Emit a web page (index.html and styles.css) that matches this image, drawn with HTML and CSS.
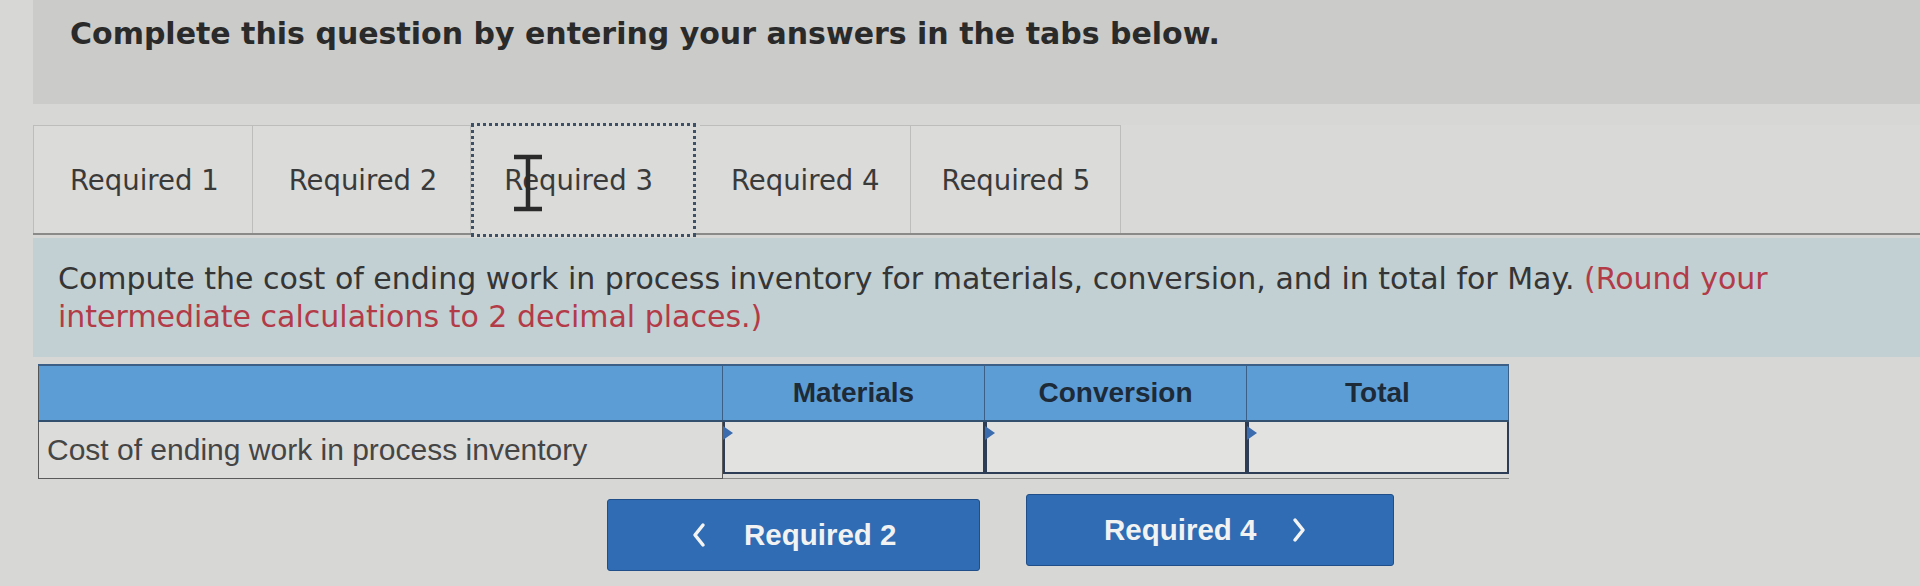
FILE: index.html
```html
<!DOCTYPE html>
<html>
<head>
<meta charset="utf-8">
<link rel="stylesheet" href="styles.css">
</head>
<body>
<div class="page">
  <header class="banner">
    <h1 class="title">Complete this question by entering your answers in the tabs below.</h1>
  </header>

  <nav class="tabs">
    <div class="tab tab-wide">Required 1</div>
    <div class="tab tab-wide">Required 2</div>
    <div class="tab tab-focus">Required 3
      <svg class="ibeam" width="32" height="58" viewBox="0 0 32 58">
        <path d="M2 3 H30 M16 3 V55 M2 55 H30" stroke="#2a2a2a" stroke-width="4.5" fill="none"/>
      </svg>
    </div>
    <div class="tab">Required 4</div>
    <div class="tab">Required 5</div>
  </nav>

  <section class="instructions">
    <p>Compute the cost of ending work in process inventory for materials, conversion, and in total for May. <span class="hint">(Round your<br>intermediate calculations to 2 decimal places.)</span></p>
  </section>

  <table class="grid">
    <thead>
      <tr>
        <th class="label-col"></th>
        <th class="num-col">Materials</th>
        <th class="num-col">Conversion</th>
        <th class="num-col">Total</th>
      </tr>
    </thead>
    <tbody>
      <tr>
        <td class="label">Cost of ending work in process inventory</td>
        <td class="input"><div class="box"><span class="flag"></span></div></td>
        <td class="input"><div class="box"><span class="flag"></span></div></td>
        <td class="input"><div class="box"><span class="flag"></span></div></td>
      </tr>
    </tbody>
  </table>

  <div class="nav-buttons">
    <button class="btn btn-prev">
      <svg width="14" height="28" viewBox="0 0 14 28"><path d="M11 4 L3 14 L11 24" stroke="#f4f4f4" stroke-width="3.5" fill="none" stroke-linecap="round" stroke-linejoin="round"/></svg>
      <span>Required 2</span>
    </button>
    <button class="btn btn-next">
      <span>Required 4</span>
      <svg width="14" height="28" viewBox="0 0 14 28"><path d="M3 4 L11 14 L3 24" stroke="#f4f4f4" stroke-width="3.5" fill="none" stroke-linecap="round" stroke-linejoin="round"/></svg>
    </button>
  </div>
</div>
</body>
</html>
```

FILE: styles.css
```css
html, body {
  margin: 0;
  padding: 0;
}
body {
  background: #d7d7d5;
  width: 1920px;
  height: 586px;
  overflow: hidden;
}
.page {
  padding-left: 33px;
}
.banner {
  background: #cbcbc9;
  height: 104px;
  box-sizing: border-box;
  padding: 14px 0 0 37px;
}
.title {
  margin: 0;
  font-family: "DejaVu Sans", Verdana, sans-serif;
  font-weight: bold;
  font-size: 30px;
  line-height: 40px;
  color: #2a2a2a;
}
.tabs {
  display: flex;
  margin-top: 21px;
  border-bottom: 2px solid #8a8a88;
  height: 108px;
  background: #d9d9d7;
}
.tab {
  position: relative;
  display: flex;
  align-items: center;
  padding: 0 30px 0 31px;
  border: 1px solid #bdbdbb;
  border-bottom: none;
  border-left: none;
  background: #dbdbd9;
  font-family: "DejaVu Sans", Verdana, sans-serif;
  font-size: 27.5px;
  color: #3a3a3a;
}
.tab-wide {
  padding: 0 33px 0 36px;
}
.tab:first-child {
  border-left: 1px solid #bdbdbb;
}
.tab-focus {
  border: 3px dotted #3e5068;
  padding: 0 40px 0 30px;
  margin-right: 4px;
  margin-top: -2px;
  margin-bottom: -4px;
}
.ibeam {
  position: absolute;
  left: 38px;
  top: 28px;
}
.instructions {
  background: #c3d0d3;
  margin-top: 3px;
  padding: 22px 20px 21px 25px;
}
.instructions p {
  margin: 0;
  font-family: "DejaVu Sans", Verdana, sans-serif;
  font-size: 30px;
  line-height: 38px;
  color: #353535;
}
.hint {
  color: #b33b48;
}
.grid {
  margin: 7px 0 0 5px;
  border-collapse: collapse;
  font-family: "Liberation Sans", Arial, sans-serif;
}
.grid th {
  background: #5d9dd5;
  height: 56px;
  border-top: 2px solid #3b5f86;
  border-left: 1px solid #3b5f86;
  border-right: 1px solid #3b5f86;
  border-bottom: 2px solid #34506f;
  font-size: 28px;
  font-weight: bold;
  color: #1d2a38;
  text-align: center;
  padding: 0;
  box-sizing: border-box;
}
.grid th.label-col {
  width: 684px;
  border-left: 1px solid #555;
}
.grid th.num-col {
  width: 262px;
}
.grid td {
  height: 57px;
  padding: 0;
  box-sizing: border-box;
  vertical-align: top;
}
.grid td.label {
  background: #dcdcda;
  border: 1px solid #5a5a5a;
  border-top: none;
  font-size: 30px;
  color: #454545;
  padding-left: 8px;
  vertical-align: middle;
}
.grid td.input {
  background: #d9d9d7;
  border-bottom: 1px solid #8a8a88;
}
.box {
  position: relative;
  height: 52px;
  background: #e2e2e0;
  border: 2px solid #2d3d55;
  border-top: none;
  box-sizing: border-box;
}
.flag {
  position: absolute;
  left: -2px;
  top: 4px;
  width: 0;
  height: 0;
  border-top: 7px solid transparent;
  border-bottom: 7px solid transparent;
  border-left: 10px solid #3a6cae;
}
.nav-buttons {
  display: flex;
  align-items: flex-start;
  gap: 46px;
  margin: 20px 0 0 574px;
}
.btn {
  display: flex;
  align-items: center;
  justify-content: flex-start;
  height: 72px;
  background: #2f6cb4;
  border: 1px solid #1f4e88;
  border-radius: 3px;
  font-family: "Liberation Sans", Arial, sans-serif;
  font-weight: bold;
  font-size: 29.5px;
  color: #f2f2f2;
  padding: 0;
  box-sizing: border-box;
}
.btn-prev {
  width: 373px;
  gap: 38px;
  padding-left: 84px;
}
.btn-next {
  width: 368px;
  gap: 36px;
  margin-top: -5px;
  padding-left: 77px;
}
```
